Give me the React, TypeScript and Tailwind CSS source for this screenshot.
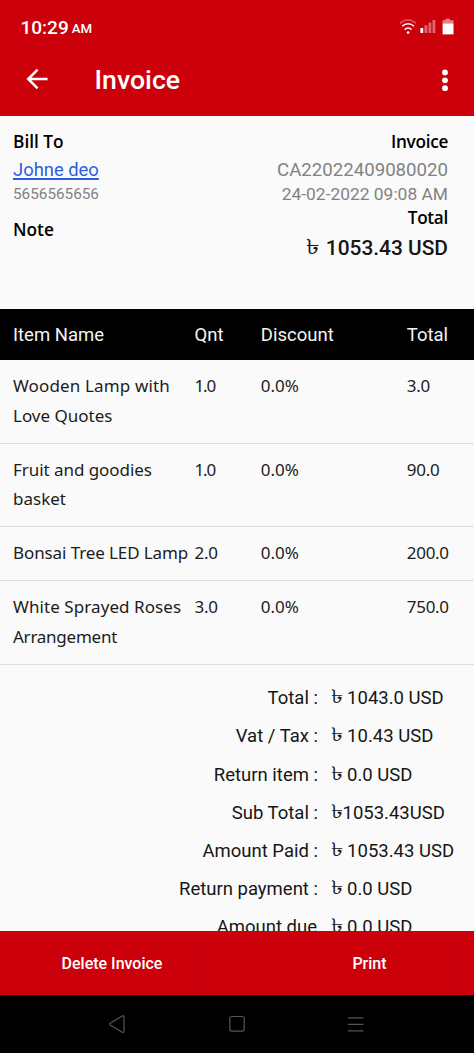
import React from 'react';

const ITEMS = [
  {
    lines: [
      { text: 'Wooden Lamp with', fit: 'tracking-[0.15px]' },
      { text: 'Love Quotes', fit: '' },
    ],
    qty: '1.0', discount: '0.0%', total: '3.0',
  },
  {
    lines: [
      { text: 'Fruit and goodies', fit: 'tracking-[-0.05px]' },
      { text: 'basket', fit: '' },
    ],
    qty: '1.0', discount: '0.0%', total: '90.0',
  },
  {
    lines: [{ text: 'Bonsai Tree LED Lamp', fit: 'tracking-[-0.1px]' }],
    qty: '2.0', discount: '0.0%', total: '200.0',
  },
  {
    lines: [
      { text: 'White Sprayed Roses', fit: 'tracking-[0.08px]' },
      { text: 'Arrangement', fit: 'tracking-[-0.25px]' },
    ],
    qty: '3.0', discount: '0.0%', total: '750.0',
  },
];

const SUMMARY = [
  { label: 'Total :', value: ' 1043.0 USD' },
  { label: 'Vat / Tax :', value: ' 10.43 USD' },
  { label: 'Return item :', value: ' 0.0 USD' },
  { label: 'Sub Total :', value: '1053.43USD' },
  { label: 'Amount Paid :', value: ' 1053.43 USD' },
  { label: 'Return payment :', value: ' 0.0 USD' },
  { label: 'Amount due', value: ' 0.0 USD' },
];

function StatusBar() {
  return (
    <div className="flex h-[54px] items-center pl-[20.5px] pr-[19px]">
      <span className="text-[19px] font-medium leading-none">10:29</span>
      <span className="ml-[3px] pt-[3px] text-[13.3px] font-medium leading-none">AM</span>
      <svg className="ml-auto" width="56" height="18" viewBox="0 0 56 18" fill="none">
        {/* wifi */}
        <path d="M1.2 5.2C5.8 .7 12.2 .7 16.8 5.2" stroke="#fff" strokeOpacity=".4" strokeWidth="1.4" />
        <path d="M3.2 8.3C6.6 5 11.6 5 15 8.3" stroke="#fff" strokeWidth="1.5" />
        <path d="M5.7 11.6C7.7 9.8 10.5 9.8 12.5 11.6" stroke="#fff" strokeWidth="1.5" />
        <circle cx="9.1" cy="14.6" r="1.3" fill="#fff" />
        {/* signal */}
        <rect x="21.4" y="10" width="2.8" height="5" fill="#fff" />
        <g fill="#fff" fillOpacity=".4">
          <rect x="25.5" y="7.2" width="2.8" height="7.8" />
          <rect x="29.5" y="4.6" width="2.8" height="10.4" />
          <rect x="33.5" y="2" width="2.8" height="13" />
        </g>
        {/* battery */}
        <path d="M46.6 .8h4.4v1.4h3.5v3.4H43.6V2.2h3z" fill="#fff" fillOpacity=".5" />
        <rect x="43.6" y="5.4" width="10.9" height="11" fill="#fff" />
      </svg>
    </div>
  );
}

function AppBar() {
  return (
    <div className="flex h-[61.5px] items-start pl-[25.5px] pr-[23px]">
      <svg className="mt-[14px]" width="23" height="22" viewBox="0 0 23 22" fill="none" stroke="#fff" strokeWidth="2.5">
        <path d="M21.5 11H2.5M11.6 1.6L2.2 11l9.4 9.4" />
      </svg>
      <h1 className="ml-[46px] mt-[10px] text-[26.7px] font-medium leading-[32px]">Invoice</h1>
      <svg className="ml-auto mt-[14px]" width="12" height="26" viewBox="0 0 12 26" fill="#fff">
        <circle cx="6" cy="4.4" r="2.9" />
        <circle cx="6" cy="12.3" r="2.9" />
        <circle cx="6" cy="20.2" r="2.9" />
      </svg>
    </div>
  );
}

function Taka({ className }: { className: string }) {
  return (
    <span className={className}>
      <span className="inline-block origin-left -translate-y-[1.5px] scale-x-[1.3]">৳</span>
    </span>
  );
}

function BillInfo() {
  return (
    <section className="flex h-[193px] justify-between pl-[13px] pr-[26px] pt-[14px]">
      <div className="flex flex-col items-start">
        <h2 className="font-['Open_Sans',sans-serif] text-[17.3px] font-semibold leading-[24px] text-black">Bill To</h2>
        <a href="#" className="mt-[5px] text-[18.4px] leading-[22px] text-[#2b5fe0] underline decoration-[1.5px] underline-offset-[2px]">Johne deo</a>
        <p className="mt-[3px] text-[15.3px] leading-[20px] text-[#828282]">5656565656</p>
        <h2 className="mt-[14px] font-['Open_Sans',sans-serif] text-[17.3px] font-semibold leading-[24px] text-black">Note</h2>
      </div>
      <div className="flex flex-col items-end">
        <h2 className="font-['Open_Sans',sans-serif] text-[17.2px] font-semibold leading-[24px] tracking-[-0.3px] text-black">Invoice</h2>
        <p className="mt-[5px] text-[18.65px] leading-[22px] text-[#828282]">CA22022409080020</p>
        <p className="mt-[2px] text-[17.4px] leading-[22px] text-[#828282]">24-02-2022 09:08 AM</p>
        <h2 className="mt-[1px] font-['Open_Sans',sans-serif] text-[17.2px] font-semibold leading-[24px] tracking-[-0.3px] text-black">Total</h2>
        <p className="mt-[5px] whitespace-pre text-[20.9px] font-medium leading-[26px] text-[#161616]">
          <Taka className="inline-block w-[14.5px]" /> 1053.43 USD
        </p>
      </div>
    </section>
  );
}

function ItemTable() {
  return (
    <section>
      <div className="flex h-[51.5px] items-center bg-black pl-[13px] pt-[4px] text-[18.5px] text-[#f4f4f4]">
        <div className="w-[181.5px]">Item Name</div>
        <div className="w-[66.3px]">Qnt</div>
        <div className="w-[146px]">Discount</div>
        <div>Total</div>
      </div>
      {ITEMS.map((item) => (
        <div
          key={item.lines[0].text}
          className="flex border-b border-[#dfdfdf] pb-[12px] pl-[13px] pt-[11px] font-['Noto_Sans',sans-serif] text-[17px] leading-[29.8px] text-[#1c1c1c]"
        >
          <div className="w-[181.5px] whitespace-nowrap">
            {item.lines.map((line) => (
              <div key={line.text} className={line.fit}>{line.text}</div>
            ))}
          </div>
          <div className={`w-[66.3px] ${item.qty === '1.0' ? 'tracking-[-1.2px]' : 'tracking-[-0.3px]'}`}>{item.qty}</div>
          <div className="w-[146px]">{item.discount}</div>
          <div className="tracking-[-0.3px]">{item.total}</div>
        </div>
      ))}
    </section>
  );
}

function Summary() {
  return (
    <section className="pt-[15.5px] text-[18.5px] text-[#161616]">
      {SUMMARY.map((row) => (
        <div key={row.label} className="flex h-[38.15px] items-center whitespace-pre">
          <div className={row.label === 'Amount due' ? 'w-[317px] text-right' : 'w-[318px] text-right'}>{row.label}</div>
          <div className={row.label === 'Amount due' ? 'ml-[13.5px]' : 'ml-[12.5px]'}>
            <Taka className="inline-block w-[12px]" />
            {row.value}
          </div>
        </div>
      ))}
    </section>
  );
}

function BottomBar() {
  return (
    <div className="flex h-[64.5px] items-center bg-[#cb000b] px-[13px] pt-[2px] text-[16px] font-medium text-white">
      <button className="h-[44px] w-[194px] border-r border-[#c4000b] pl-[5px]">Delete Invoice</button>
      <button className="ml-auto h-[44px] w-[182px] border-x border-[#c4000b] pr-[1px]">Print</button>
    </div>
  );
}

function NavBar() {
  return (
    <nav className="flex h-[58px] items-center justify-center gap-[101px] bg-black">
      <svg width="18" height="20" viewBox="0 0 18 20" fill="none" stroke="#555" strokeWidth="1.2">
        <path d="M13.2 1.9L1.2 9.2c-.7.5-.7 1.3 0 1.8l12 7.2c.9.5 1.8 0 1.8-.9V2.8c0-.9-.9-1.4-1.8-.9z" />
      </svg>
      <svg width="18" height="20" viewBox="0 0 18 20" fill="none" stroke="#555" strokeWidth="1.2">
        <rect x="1.8" y="2.5" width="14.4" height="14.6" rx="2" />
      </svg>
      <svg width="18" height="20" viewBox="0 0 18 20" stroke="#555" strokeWidth="1.2">
        <path d="M.8 3.8h15.6M.8 10.3h15.6M.8 16.8h15.6" />
      </svg>
    </nav>
  );
}

export default function App() {
  return (
    <div className="flex h-[1053px] w-[474px] flex-col overflow-hidden bg-[#fafafa] font-['Roboto',sans-serif]">
      <header className="bg-[#cb000b] text-white">
        <StatusBar />
        <AppBar />
      </header>
      <main className="min-h-0 flex-1 overflow-hidden">
        <BillInfo />
        <ItemTable />
        <Summary />
      </main>
      <BottomBar />
      <NavBar />
    </div>
  );
}
